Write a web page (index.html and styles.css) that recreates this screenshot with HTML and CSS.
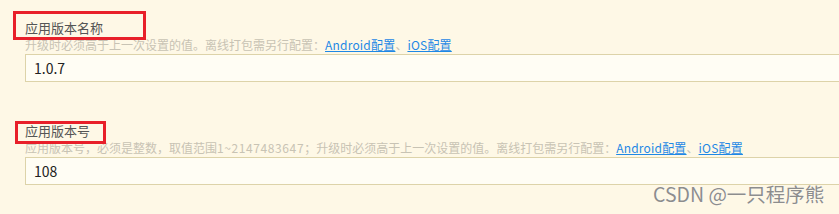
FILE: index.html
```html
<!DOCTYPE html>
<html lang="zh-CN">
<head>
<meta charset="utf-8">
<link rel="stylesheet" href="styles.css">
</head>
<body>
<div class="page">
  <div class="field">
    <div class="label">应用版本名称</div>
    <div class="hint">升级时必须高于上一次设置的值。离线打包需另行配置：<a class="link">Android配置</a>、<a class="link">iOS配置</a></div>
    <div class="input">1.0.7</div>
    <div class="mark mark-1"></div>
  </div>
  <div class="field field-2">
    <div class="label">应用版本号</div>
    <div class="hint">应用版本号，必须是整数，取值范围<span class="num">1~2147483647</span>；升级时必须高于上一次设置的值。离线打包需另行配置：<a class="link">Android配置</a>、<a class="link">iOS配置</a></div>
    <div class="input">108</div>
    <div class="mark mark-2"></div>
  </div>
  <div class="watermark">CSDN @一只程序熊</div>
</div>
</body>
</html>
```
FILE: styles.css
```css
html, body {
  margin: 0;
  padding: 0;
  background: #fef8e6;
  overflow: hidden;
}
.page {
  position: relative;
  width: 839px;
  height: 214px;
  padding-top: 19px;
  box-sizing: border-box;
  font-family: "Noto Sans CJK SC", "Noto Sans", sans-serif;
}
.field {
  position: relative;
  padding-left: 25px;
}
.field-2 {
  margin-top: 40px;
}
.label {
  font-size: 13px;
  line-height: 18px;
  color: #555;
  white-space: nowrap;
}
.hint {
  font-size: 12px;
  line-height: 16px;
  color: #c8c3b4;
  white-space: nowrap;
}
.num {
  letter-spacing: 0.6px;
}
.link {
  color: #1e88e5;
  text-decoration: underline;
  letter-spacing: 0.2px;
}
.input {
  margin-top: 1px;
  height: 26px;
  width: 840px;
  border: 1px solid #ddd3a9;
  background: #fffdf4;
  font-size: 14px;
  line-height: 26px;
  padding-left: 8px;
  color: #222;
  box-sizing: content-box;
}
.mark {
  position: absolute;
  border: 3px solid #e8202a;
  box-sizing: border-box;
}
.mark-1 {
  left: 13px;
  top: -8px;
  width: 133px;
  height: 29px;
}
.mark-2 {
  left: 15px;
  top: -1px;
  width: 91px;
  height: 23px;
}
.watermark {
  position: absolute;
  left: 653px;
  top: 182px;
  font-size: 19.5px;
  line-height: 24px;
  color: #8d8d8d;
  text-shadow: 0 0 1px #fff;
  white-space: nowrap;
}
```
